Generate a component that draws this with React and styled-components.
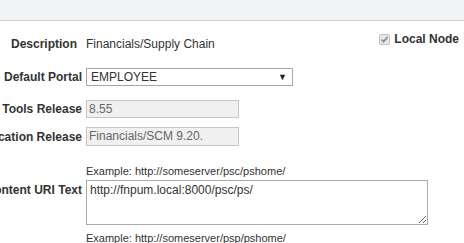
import React from 'react'
import styled, { createGlobalStyle } from 'styled-components'

const Global = createGlobalStyle`
  html, body {
    margin: 0;
    padding: 0;
    background: #fff;
    overflow: hidden;
  }
  body {
    font-family: "Liberation Sans", Arial, sans-serif;
    color: #333;
  }
`

const Page = styled.div`
  width: 464px;
  height: 243px;
  overflow: hidden;
`

const TopBand = styled.div`
  height: 20px;
  background: #f2f4f5;
  border-bottom: 1px solid #cdd1d4;
`

const Row = styled.div`
  display: grid;
  grid-template-columns: 82px 1fr auto;
  column-gap: 4px;
  align-items: ${p => (p.$top ? 'start' : 'center')};
  margin-top: ${p => p.$gap}px;
  padding-right: 5px;
`

const Label = styled.div`
  display: flex;
  justify-content: flex-end;
  padding-top: ${p => p.$pad || 0}px;
  padding-right: ${p => p.$right || 0}px;
  font-size: 12px;
  font-weight: bold;
  line-height: 14px;
  white-space: nowrap;
  & > span {
    flex-shrink: 0;
  }
`

const Value = styled.div`
  font-size: 12px;
  line-height: 14px;
  padding-top: ${p => p.$pad || 0}px;
  white-space: nowrap;
`

const SelectBox = styled.div`
  box-sizing: border-box;
  width: 207px;
  height: 18px;
  border: 1px solid #a6a6a6;
  background: #fff;
  display: flex;
  align-items: center;
  justify-content: space-between;
  padding: 0 4px 0 4px;
  font-size: 12px;
`

const Arrow = styled.span`
  font-size: 9px;
  color: #222;
  margin-right: 1px;
`

const ReadOnly = styled.div`
  box-sizing: border-box;
  width: 153px;
  height: ${p => p.$h}px;
  border: 1px solid #c6c6c6;
  background: #f0f0f0;
  color: #666;
  font-size: 12px;
  line-height: 14px;
  padding: 1px 2px;
  white-space: nowrap;
  overflow: hidden;
`

const Hint = styled.div`
  grid-column: 2 / 4;
  font-size: 11px;
  line-height: 13px;
  color: #333;
  white-space: nowrap;
`

const TextArea = styled.textarea`
  display: block;
  box-sizing: border-box;
  width: 342px;
  height: 45px;
  margin: 0;
  border: 1px solid #a9a9a9;
  border-radius: 0;
  padding: 2px 3px;
  font-family: "Liberation Sans", Arial, sans-serif;
  font-size: 12px;
  line-height: 14px;
  color: #333;
  outline: none;
  resize: both;
`

const Check = styled.label`
  display: flex;
  align-items: center;
  gap: 4px;
  font-size: 12px;
  font-weight: bold;
  line-height: 14px;
  margin-top: -1px;
  white-space: nowrap;
`

const CheckIcon = () => (
  <svg width="11" height="11" viewBox="0 0 11 11">
    <rect x="0.5" y="0.5" width="10" height="10" rx="1.5" fill="#e8e8e8" stroke="#c0c0c0" />
    <path d="M2.6 5.6 L4.6 7.6 L8.6 3" fill="none" stroke="#8d8d8d" strokeWidth="1.8" />
  </svg>
)

export default function App() {
  return (
    <Page>
      <Global />
      <TopBand />
      <Row $gap={12} $top>
        <Label $pad={4} $right={5}><span>Description</span></Label>
        <Value $pad={4}>Financials/Supply Chain</Value>
        <Check><CheckIcon />Local Node</Check>
      </Row>
      <Row $gap={17}>
        <Label><span>Default Portal</span></Label>
        <SelectBox>
          <span>EMPLOYEE</span>
          <Arrow>▼</Arrow>
        </SelectBox>
      </Row>
      <Row $gap={14}>
        <Label><span>Tools Release</span></Label>
        <ReadOnly $h={18}>8.55</ReadOnly>
      </Row>
      <Row $gap={9}>
        <Label><span>Application Release</span></Label>
        <ReadOnly $h={19}>Financials/SCM 9.20.</ReadOnly>
      </Row>
      <Row $gap={19}>
        <div />
        <Hint>Example: http://someserver/psc/pshome/</Hint>
      </Row>
      <Row $gap={2} $top>
        <Label $pad={3}><span>Content URI Text</span></Label>
        <div>
          <TextArea defaultValue="http://fnpum.local:8000/psc/ps/" />
        </div>
      </Row>
      <Row $gap={7}>
        <div />
        <Hint>Example: http://someserver/psp/pshome/</Hint>
      </Row>
    </Page>
  )
}
